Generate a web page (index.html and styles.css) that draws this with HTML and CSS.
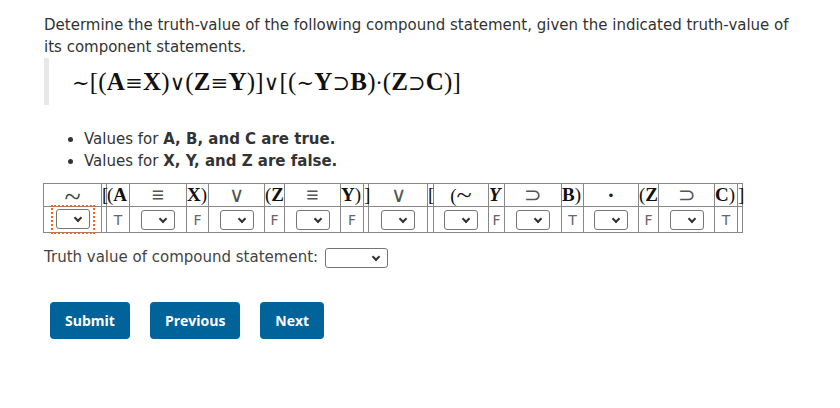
FILE: index.html
```html
<!DOCTYPE html>
<html>
<head>
<meta charset="utf-8">
<link rel="stylesheet" href="styles.css">
</head>
<body>
<div class="page">
  <p class="intro">Determine the truth-value of the following compound statement, given the indicated truth-value of its component statements.</p>
  <div class="formula"><span class="op">∼</span>[(<b>A</b><span class="op">≡</span><b>X</b>)<span class="op">∨</span>(<b>Z</b><span class="op">≡</span><b>Y</b>)]<span class="op">∨</span>[(<span class="op">∼</span><b>Y</b><span class="op">⊃</span><b>B</b>)<span class="op">·</span>(<b>Z</b><span class="op">⊃</span><b>C</b>)]</div>
  <ul class="values">
    <li>Values for <strong>A, B, and C are true.</strong></li>
    <li>Values for <strong>X, Y, and Z are false.</strong></li>
  </ul>
  <table class="tt">
    <colgroup>
      <col class="c58"><col class="c5"><col class="c23"><col class="c57"><col class="c22"><col class="c56"><col class="c20"><col class="c56"><col class="c23"><col class="c5"><col class="c59"><col class="c6"><col class="c55"><col class="c16"><col class="c57"><col class="c22"><col class="c55"><col class="c20"><col class="c56"><col class="c23"><col class="c5">
    </colgroup>
    <tr class="head">
      <td class="sym tilde">~</td>
      <td class="var">[</td>
      <td class="var">(<b>A</b></td>
      <td class="sym">≡</td>
      <td class="var"><b>X</b>)</td>
      <td class="sym">∨</td>
      <td class="var">(<b>Z</b></td>
      <td class="sym">≡</td>
      <td class="var"><b>Y</b>)</td>
      <td class="var">]</td>
      <td class="sym">∨</td>
      <td class="var">[</td>
      <td class="var c">(<span class="sym2">~</span></td>
      <td class="var"><b><i>Y</i></b></td>
      <td class="sym">⊃</td>
      <td class="var"><b>B</b>)</td>
      <td class="sym dot">·</td>
      <td class="var">(<b>Z</b></td>
      <td class="sym">⊃</td>
      <td class="var"><b>C</b>)</td>
      <td class="var">]</td>
    </tr>
    <tr class="vals">
      <td><span class="focus"><span class="sw"><select class="sel"><option></option><option>T</option><option>F</option></select></span></span></td>
      <td></td>
      <td class="tv">T</td>
      <td><span class="sw"><select class="sel"><option></option><option>T</option><option>F</option></select></span></td>
      <td class="tv">F</td>
      <td><span class="sw"><select class="sel"><option></option><option>T</option><option>F</option></select></span></td>
      <td class="tv">F</td>
      <td><span class="sw"><select class="sel"><option></option><option>T</option><option>F</option></select></span></td>
      <td class="tv">F</td>
      <td></td>
      <td><span class="sw"><select class="sel"><option></option><option>T</option><option>F</option></select></span></td>
      <td></td>
      <td><span class="sw"><select class="sel"><option></option><option>T</option><option>F</option></select></span></td>
      <td class="tv">F</td>
      <td><span class="sw"><select class="sel"><option></option><option>T</option><option>F</option></select></span></td>
      <td class="tv">T</td>
      <td><span class="sw"><select class="sel"><option></option><option>T</option><option>F</option></select></span></td>
      <td class="tv">F</td>
      <td><span class="sw"><select class="sel"><option></option><option>T</option><option>F</option></select></span></td>
      <td class="tv">T</td>
      <td></td>
    </tr>
  </table>
  <div class="answer">Truth value of compound statement: <span class="sw"><select class="sel wide"><option></option><option>T</option><option>F</option></select></span></div>
  <div class="buttons">
    <button class="btn submit">Submit</button>
    <button class="btn">Previous</button>
    <button class="btn">Next</button>
  </div>
</div>
</body>
</html>
```

FILE: styles.css
```css
html, body {
  margin: 0;
  padding: 0;
  background: #fff;
}
.page {
  padding: 14px 0 0 44px;
  font-family: "DejaVu Sans", Verdana, sans-serif;
  font-size: 15px;
  color: #333;
}
.intro {
  margin: 0;
  line-height: 22px;
  width: 765px;
}
.formula {
  margin: 0;
  height: 47px;
  line-height: 47px;
  border-left: 5px solid #e8e8e8;
  padding-left: 23px;
  font-family: "Liberation Serif", "DejaVu Serif", serif;
  font-size: 25px;
  letter-spacing: 0.2px;
  color: #111;
}
.formula .op {
  font-family: "DejaVu Serif", serif;
  font-size: 21px;
}
.values {
  margin: 23px 0 0 0;
  padding-left: 40px;
  line-height: 22px;
}
.tt {
  margin: 11px 0 0 -1px;
  border-collapse: collapse;
  table-layout: fixed;
  width: 699px;
}
.c5 { width: 5px; }
.c6 { width: 6px; }
.c16 { width: 16px; }
.c20 { width: 20px; }
.c22 { width: 22px; }
.c23 { width: 23px; }
.c55 { width: 55px; }
.c56 { width: 56px; }
.c57 { width: 57px; }
.c58 { width: 58px; }
.c59 { width: 59px; }
.tt td {
  border: 1px solid #888;
  padding: 0;
  text-align: center;
  white-space: nowrap;
  overflow: visible;
  line-height: 18px;
}
.tt .head td {
  height: 22px;
}
.tt .vals td {
  height: 25px;
}
.sym {
  font-family: "DejaVu Sans", sans-serif;
  font-size: 21px;
  font-weight: 300;
  color: #555;
}
.tilde {
  font-family: "Liberation Serif", serif;
  font-size: 30px;
  color: #444;
  vertical-align: bottom;
}
.dot {
  font-family: "Liberation Serif", serif;
  font-weight: 700;
  font-size: 22px;
  color: #222;
}
.var {
  font-family: "Liberation Serif", "DejaVu Serif", serif;
  font-size: 19px;
  color: #111;
  text-align: left !important;
}
.var.c {
  text-align: center !important;
}
.sym2 {
  font-family: "Liberation Serif", serif;
  font-size: 28px;
  color: #222;
  vertical-align: -2px;
}
.tv {
  font-family: "DejaVu Sans", sans-serif;
  font-size: 14px;
  color: #666;
}
.sw {
  position: relative;
  display: inline-block;
  vertical-align: middle;
  line-height: 0;
}
.sw::after {
  content: "";
  position: absolute;
  right: 9px;
  top: 6px;
  width: 4px;
  height: 4px;
  border-right: 2px solid #333;
  border-bottom: 2px solid #333;
  transform: rotate(45deg);
  pointer-events: none;
}
.sel {
  -webkit-appearance: none;
  appearance: none;
  width: 34px;
  height: 20px;
  vertical-align: middle;
  border: 1px solid #767676;
  border-radius: 3px;
  background: #fff;
  font-size: 12px;
  margin: 0;
  padding: 0;
}
.focus {
  display: inline-block;
  outline: 2px dotted #f26522;
  outline-offset: 0;
  padding: 2px 3px 3px 3px;
  line-height: 0;
}
.answer {
  margin-top: 13px;
  line-height: 22px;
  color: #444;
}
.sel.wide {
  width: 63px;
}
.answer .sw {
  margin-left: 2px;
}
.buttons {
  margin: 34px 0 0 6px;
  display: flex;
  gap: 20px;
}
.btn {
  height: 37px;
  padding: 0 15px;
  border: none;
  border-radius: 4px;
  background: #006399;
  color: #fff;
  font-family: "Open Sans", sans-serif;
  font-weight: 700;
  font-size: 14px;
}
```
